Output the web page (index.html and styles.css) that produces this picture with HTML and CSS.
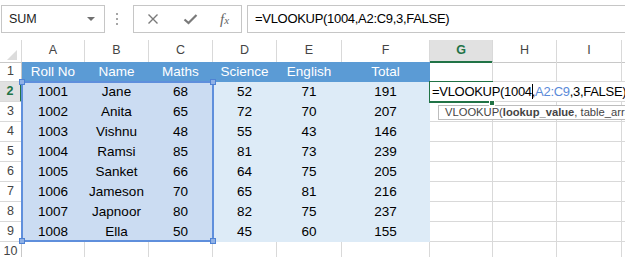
FILE: index.html
```html
<!DOCTYPE html>
<html lang="en">

<head>
  <meta charset="UTF-8" />
  <meta name="viewport" content="width=device-width, initial-scale=1.0" />
  <title>VLOOKUP</title>
  <link rel="stylesheet" href="styles.css">
</head>

<body>
  <!-- 名称框 + 编辑栏 -->
  <div class="bar">
    <div class="namebox"><span>SUM</span><span class="caret"></span></div>
    <div class="grip"><i></i><i></i><i></i></div>
    <div class="btns">
      <span class="btn b1">
        <svg width="12" height="12" viewBox="0 0 12 12"><path d="M1.5 1.5 L10.5 10.5 M10.5 1.5 L1.5 10.5" stroke="#7a7a7a" stroke-width="1.4" fill="none" /></svg>
      </span>
      <span class="btn b2">
        <svg width="15" height="12" viewBox="0 0 15 12"><path d="M1.5 6.5 L5.5 10 L13.5 2" stroke="#7a7a7a" stroke-width="2.2" fill="none" /></svg>
      </span>
      <span class="btn b3"><span class="fx">f<small>x</small></span></span>
    </div>
    <div class="formula">=VLOOKUP(1004,A2:C9,3,FALSE)</div>
  </div>

  <!-- 表格区域 -->
  <div class="sheet">
    <div class="row cols">
      <div class="corner"><span class="tri"></span></div>
      <div>A</div><div>B</div><div>C</div><div>D</div><div>E</div><div>F</div>
      <div class="on-col">G</div><div>H</div><div>I</div><div></div>
    </div>
    <div class="row">
      <div class="num">1</div>
      <div class="hdr">Roll No</div><div class="hdr">Name</div><div class="hdr">Maths</div>
      <div class="hdr">Science</div><div class="hdr">English</div><div class="hdr">Total</div>
      <div></div><div></div><div></div><div></div>
    </div>
    <div class="row">
      <div class="num on-row">2</div>
      <div class="pick">1001</div><div class="pick">Jane</div><div class="pick">68</div>
      <div class="dat">52</div><div class="dat">71</div><div class="dat">191</div>
      <div class="active">
        <span class="edit">=VLOOKUP(1004<span class="cur"></span>,<span class="ref">A2:C9</span>,3,FALSE)</span>
        <span class="fill"></span>
      </div>
      <div></div><div></div><div></div>
    </div>
    <div class="row">
      <div class="num">3</div>
      <div class="pick">1002</div><div class="pick">Anita</div><div class="pick">65</div>
      <div class="dat">72</div><div class="dat">70</div><div class="dat">207</div>
      <div></div><div></div><div></div><div></div>
    </div>
    <div class="row">
      <div class="num">4</div>
      <div class="pick">1003</div><div class="pick">Vishnu</div><div class="pick">48</div>
      <div class="dat">55</div><div class="dat">43</div><div class="dat">146</div>
      <div></div><div></div><div></div><div></div>
    </div>
    <div class="row">
      <div class="num">5</div>
      <div class="pick">1004</div><div class="pick">Ramsi</div><div class="pick">85</div>
      <div class="dat">81</div><div class="dat">73</div><div class="dat">239</div>
      <div></div><div></div><div></div><div></div>
    </div>
    <div class="row">
      <div class="num">6</div>
      <div class="pick">1005</div><div class="pick">Sanket</div><div class="pick">66</div>
      <div class="dat">64</div><div class="dat">75</div><div class="dat">205</div>
      <div></div><div></div><div></div><div></div>
    </div>
    <div class="row">
      <div class="num">7</div>
      <div class="pick">1006</div><div class="pick">Jameson</div><div class="pick">70</div>
      <div class="dat">65</div><div class="dat">81</div><div class="dat">216</div>
      <div></div><div></div><div></div><div></div>
    </div>
    <div class="row">
      <div class="num">8</div>
      <div class="pick">1007</div><div class="pick">Japnoor</div><div class="pick">80</div>
      <div class="dat">82</div><div class="dat">75</div><div class="dat">237</div>
      <div></div><div></div><div></div><div></div>
    </div>
    <div class="row">
      <div class="num">9</div>
      <div class="pick">1008</div><div class="pick">Ella</div><div class="pick">50</div>
      <div class="dat">45</div><div class="dat">60</div><div class="dat">155</div>
      <div></div><div></div><div></div><div></div>
    </div>
    <div class="row">
      <div class="num">10</div>
      <div></div><div></div><div></div><div></div><div></div><div></div>
      <div></div><div></div><div></div><div></div>
    </div>

    <!-- 引用区域 A2:C9 的蓝框 -->
    <div class="range">
      <span class="h tl"></span><span class="h tr"></span>
      <span class="h bl"></span><span class="h br"></span>
    </div>

    <!-- 函数提示 -->
    <div class="tip">VLOOKUP(<b>lookup_value</b>, table_array, col_index_num, [range_lookup])</div>
  </div>
</body>

</html>
```

FILE: styles.css
```css
* {
  margin: 0;
  padding: 0;
  box-sizing: border-box;
}

body {
  width: 625px;
  height: 257px;
  overflow: hidden;
  background: #fff;
  font-family: "Liberation Sans", Arial, sans-serif;
  color: #000;
}

/* 编辑栏 */
.bar {
  display: flex;
  height: 40px;
  padding-top: 5px;
}

.namebox {
  margin-left: 1px;
  width: 104px;
  height: 28px;
  border: 1px solid #c6c6c6;
  display: flex;
  align-items: center;
  justify-content: space-between;
  padding: 0 9px 0 7px;
  font-size: 12.5px;
  color: #222;
}

.caret {
  border-left: 4px solid transparent;
  border-right: 4px solid transparent;
  border-top: 4px solid #707070;
}

.grip {
  width: 28px;
  height: 28px;
  display: flex;
  flex-direction: column;
  align-items: center;
  justify-content: center;
  gap: 3px;
  padding-right: 4px;
}

.grip i {
  width: 2px;
  height: 2px;
  background: #a6a6a6;
}

.btns {
  width: 109px;
  height: 28px;
  border: 1px solid #c6c6c6;
  display: flex;
  align-items: center;
}

.btn {
  display: flex;
  justify-content: center;
  align-items: center;
  height: 100%;
}

.b1 {
  width: 38px;
}

.b2 {
  width: 36px;
}

.b3 {
  width: 33px;
}

.fx {
  font-family: "Liberation Serif", "Times New Roman", serif;
  font-style: italic;
  font-size: 15px;
  color: #666;
}

.fx small {
  font-size: 11px;
}

.formula {
  flex: 1;
  margin-left: 5px;
  margin-right: -10px;
  height: 28px;
  border: 1px solid #c6c6c6;
  padding-left: 7px;
  font-size: 13px;
  letter-spacing: -0.3px;
  line-height: 26px;
  white-space: nowrap;
}

/* 表格 */
.sheet {
  position: relative;
}

.row {
  display: grid;
  grid-template-columns: 22px 63px 64px 64px 64px 65px 88px 63px 64px 65px 20px;
  height: 20px;
}

.row > div {
  border-right: 1px solid #d9d9d9;
  border-bottom: 1px solid #d9d9d9;
  font-size: 13.5px;
  text-align: center;
  line-height: 19px;
  white-space: nowrap;
}

.cols {
  height: 22px;
}

.cols > div {
  font-size: 12.5px;
  color: #444;
  line-height: 21px;
  border-bottom-color: #c8c8c8;
}

.corner {
  display: flex;
  align-items: flex-end;
  justify-content: flex-end;
  padding: 0 4px 2px 0;
}

.tri {
  border-left: 10px solid transparent;
  border-bottom: 10px solid #dcdcdc;
}

.row .num {
  font-size: 12.5px;
  color: #444;
  border-right-color: #c8c8c8;
}

.row .hdr {
  background: #5b9bd5;
  border-color: #5b9bd5;
  color: #fff;
}

.row .dat {
  background: #ddebf7;
  border-color: #ddebf7;
}

.row .pick {
  background: #cbdcf2;
  border-color: #cbdcf2;
}

.row .on-col {
  background: #e1e1e1;
  color: #217346;
  font-weight: bold;
  border-bottom: 2px solid #217346;
}

.row .on-row {
  background: #e1e1e1;
  color: #217346;
  font-weight: bold;
  border-right: 2px solid #217346;
}

/* 活动单元格 G2 */
.active {
  position: relative;
}

.active::after {
  content: "";
  position: absolute;
  left: -1px;
  top: -1px;
  right: -1px;
  bottom: -2px;
  border: 2px solid #217346;
  border-right: none;
}

.edit {
  position: absolute;
  left: 0;
  top: 0;
  height: 19px;
  padding-left: 2px;
  background: #fff;
  font-size: 13px;
  letter-spacing: -0.3px;
  line-height: 19px;
  z-index: 1;
}

.cur {
  display: inline-block;
  width: 1px;
  height: 15px;
  margin-right: -1px;
  background: #000;
  vertical-align: -3px;
}

.ref {
  color: #5a8ad8;
}

.fill {
  position: absolute;
  right: -3px;
  bottom: -5px;
  width: 6px;
  height: 6px;
  background: #217346;
  border: 1px solid #fff;
  z-index: 2;
}

/* 引用框 */
.range {
  position: absolute;
  left: 21px;
  top: 41px;
  width: 193px;
  height: 161px;
  border: 2px solid #5f8fdc;
}

.range .h {
  position: absolute;
  width: 6px;
  height: 6px;
  background: #8fb1e6;
  border: 1px solid #4f82d4;
}

.range .tl {
  left: -4px;
  top: -4px;
}

.range .tr {
  right: -4px;
  top: -4px;
}

.range .bl {
  left: -4px;
  bottom: -4px;
}

.range .br {
  right: -4px;
  bottom: -4px;
}

/* 函数提示框 */
.tip {
  position: absolute;
  left: 438px;
  top: 65px;
  height: 15px;
  padding: 0 4px 0 6px;
  border: 1px solid #bdbdbd;
  background: #fff;
  font-size: 11.2px;
  color: #444;
  line-height: 13px;
  white-space: nowrap;
}
```
